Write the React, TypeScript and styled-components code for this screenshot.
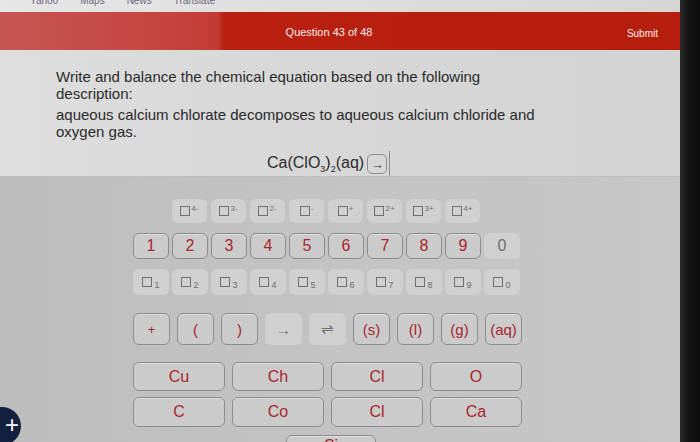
import React from 'react'
import styled, { createGlobalStyle, css } from 'styled-components'

const GlobalStyle = createGlobalStyle`
  html, body {
    margin: 0;
    padding: 0;
    background: #111;
  }
  body {
    font-family: 'Liberation Sans', Arial, sans-serif;
  }
`

const CHARGES = ['4-', '3-', '2-', '-', '+', '2+', '3+', '4+']
const DIGITS = ['1', '2', '3', '4', '5', '6', '7', '8', '9', '0']
const SUBS = ['1', '2', '3', '4', '5', '6', '7', '8', '9', '0']
const SYMBOLS: { label: string; muted?: boolean; small?: boolean }[] = [
  { label: '+', small: true },
  { label: '(' },
  { label: ')' },
  { label: '→', muted: true },
  { label: '⇌', muted: true },
  { label: '(s)' },
  { label: '(l)' },
  { label: '(g)' },
  { label: '(aq)' },
]
const ELEMENTS_A = ['Cu', 'Ch', 'Cl', 'O']
const ELEMENTS_B = ['C', 'Co', 'Cl', 'Ca']

export default function App() {
  return (
    <>
      <GlobalStyle />
      <Frame>
        <Screen>
          <BrowserBar>
            <Bookmark>Yahoo</Bookmark>
            <Bookmark>Maps</Bookmark>
            <Bookmark>News</Bookmark>
            <Bookmark>Translate</Bookmark>
          </BrowserBar>
          <Header>
            <span />
            <HeaderTitle>Question 43 of 48</HeaderTitle>
            <SubmitLink>Submit</SubmitLink>
          </Header>
          <Question>
            <Prompt>
              Write and balance the chemical equation based on the following description:
            </Prompt>
            <Prompt $spaced>
              aqueous calcium chlorate decomposes to aqueous calcium chloride and oxygen gas.
            </Prompt>
            <Equation>
              <span>
                Ca(ClO<Sub>3</Sub>)<Sub>2</Sub>(aq)
              </span>
              <ArrowBox>→</ArrowBox>
              <Caret />
            </Equation>
          </Question>
          <Keypad>
            <KeyRow $offset={39} $gap={4}>
              {CHARGES.map((c) => (
                <Key key={c} $w={35} $h={24} $muted>
                  <Slot />
                  <Sup>{c}</Sup>
                </Key>
              ))}
            </KeyRow>
            <KeyRow $gap={3} $top={10}>
              {DIGITS.map((d) => (
                <Key key={d} $w={36} $h={26} $muted={d === '0'} $size={16}>
                  {d}
                </Key>
              ))}
            </KeyRow>
            <KeyRow $gap={3} $top={10}>
              {SUBS.map((s) => (
                <Key key={s} $w={36} $h={26} $muted>
                  <Slot />
                  <SubDigit>{s}</SubDigit>
                </Key>
              ))}
            </KeyRow>
            <KeyRow $gap={7} $top={18}>
              {SYMBOLS.map((s) => (
                <Key key={s.label} $w={37} $h={32} $muted={s.muted} $size={s.small ? 13 : 15}>
                  {s.label}
                </Key>
              ))}
            </KeyRow>
            <KeyRow $gap={7} $top={17}>
              {ELEMENTS_A.map((e, i) => (
                <Key key={e + i} $w={92} $h={29} $size={16}>
                  {e}
                </Key>
              ))}
            </KeyRow>
            <KeyRow $gap={7} $top={6}>
              {ELEMENTS_B.map((e, i) => (
                <Key key={e + i} $w={92} $h={30} $size={16}>
                  {e}
                </Key>
              ))}
            </KeyRow>
            <KeyRow $offset={153} $top={8}>
              <Key $w={90} $h={30} $size={16} $alignTop>
                Si
              </Key>
            </KeyRow>
            <AddBubble>+</AddBubble>
          </Keypad>
        </Screen>
        <Bezel />
      </Frame>
    </>
  )
}

const Frame = styled.div`
  width: 700px;
  height: 442px;
  display: flex;
  overflow: hidden;
`

const Screen = styled.div`
  width: 680px;
  display: flex;
  flex-direction: column;
  background: #d4d4d4;
`

const Bezel = styled.div`
  flex: 1;
  background: linear-gradient(90deg, #2a2a2a 0%, #151515 40%, #0c0c0c 100%);
`

const BrowserBar = styled.div`
  flex: none;
  height: 12px;
  display: flex;
  gap: 22px;
  padding-left: 30px;
  background: linear-gradient(90deg, #e6e6e6, #dcdcdc 60%, #d6d6d6);
  overflow: hidden;
`

const Bookmark = styled.span`
  font-size: 10px;
  line-height: 10px;
  margin-top: -4px;
  color: #6a6a78;
`

const Header = styled.div`
  flex: none;
  height: 38px;
  display: grid;
  grid-template-columns: 1fr auto 1fr;
  align-items: center;
  padding-right: 22px;
  background: linear-gradient(
    90deg,
    #c65652 0%,
    #c4443f 25%,
    #c23b33 32%,
    #b8200f 33%,
    #b51d0d 100%
  );
  color: #fbeeee;
  font-size: 11px;
`

const HeaderTitle = styled.span`
  padding-top: 1px;
`

const SubmitLink = styled.span`
  justify-self: end;
  font-size: 10px;
  padding-top: 4px;
`

const Question = styled.div`
  flex: none;
  height: 126px;
  box-sizing: border-box;
  padding: 18px 0 0 56px;
  background: linear-gradient(90deg, #dedede 0%, #d9d9d9 30%, #d3d3d3 100%);
  color: #2b2b2b;
`

const Prompt = styled.p<{ $spaced?: boolean }>`
  margin: ${(p) => (p.$spaced ? '4px' : '0')} 0 0;
  width: 505px;
  font-size: 15px;
  line-height: 17px;
`

const Equation = styled.div`
  display: flex;
  align-items: center;
  margin: 11px 0 0 211px;
  font-size: 16px;
  height: 26px;
`

const Sub = styled.sub`
  font-size: 9px;
  vertical-align: -4px;
`

const ArrowBox = styled.span`
  margin-left: 3px;
  width: 20px;
  height: 20px;
  box-sizing: border-box;
  border: 1px solid #8d8d8d;
  border-radius: 5px;
  display: flex;
  align-items: center;
  justify-content: center;
  font-size: 13px;
  color: #333;
`

const Caret = styled.span`
  margin-left: 2px;
  width: 1px;
  height: 26px;
  background: #8a8a8a;
`

const Keypad = styled.div`
  position: relative;
  flex: 1;
  min-height: 0;
  overflow: hidden;
  padding: 22px 0 0 133px;
  border-top: 1px solid #bdbdbd;
  background: linear-gradient(90deg, #bdbdbd 0%, #c2c2c2 40%, #c7c7c7 100%);
`

const KeyRow = styled.div<{ $offset?: number; $gap?: number; $top?: number }>`
  display: flex;
  gap: ${(p) => p.$gap ?? 0}px;
  margin-left: ${(p) => p.$offset ?? 0}px;
  margin-top: ${(p) => p.$top ?? 0}px;
`

const Key = styled.div<{
  $w: number
  $h: number
  $muted?: boolean
  $size?: number
  $alignTop?: boolean
}>`
  flex: none;
  width: ${(p) => p.$w}px;
  height: ${(p) => p.$h}px;
  box-sizing: border-box;
  border-radius: 6px;
  display: flex;
  align-items: ${(p) => (p.$alignTop ? 'flex-start' : 'center')};
  justify-content: center;
  font-size: ${(p) => p.$size ?? 13}px;
  ${(p) =>
    p.$muted
      ? css`
          background: #d0d0d0;
          color: #6e6e6e;
        `
      : css`
          background: #cbcbcb;
          border: 1px solid #8c8c8c;
          color: #a8262c;
          box-shadow: inset 0 1px 0 rgba(255, 255, 255, 0.35);
        `}
  ${(p) =>
    p.$alignTop &&
    css`
      padding-top: 1px;
    `}
`

const Slot = styled.span`
  width: 8px;
  height: 8px;
  border: 1px solid #707070;
`

const Sup = styled.span`
  font-size: 8px;
  align-self: flex-start;
  margin-top: 5px;
  margin-left: 1px;
`

const SubDigit = styled.span`
  font-size: 9px;
  align-self: flex-end;
  margin-bottom: 5px;
  margin-left: 2px;
`

const AddBubble = styled.div`
  position: absolute;
  left: -17px;
  top: 230px;
  width: 38px;
  height: 38px;
  border-radius: 50%;
  background: #13213f;
  color: #fff;
  font-size: 24px;
  line-height: 36px;
  text-align: right;
  padding-right: 2px;
  box-sizing: border-box;
`
